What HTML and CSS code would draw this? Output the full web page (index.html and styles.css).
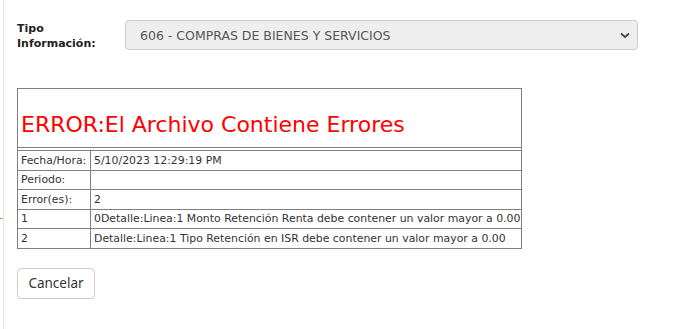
FILE: index.html
```html
<!DOCTYPE html>
<html lang="es">
<head>
    <meta charset="UTF-8">
    <title>Carga de Archivo</title>
    <link rel="stylesheet" href="styles.css">
</head>
<body>
<div class="page">
    <span class="tick"></span>
    <div class="fila">
        <label class="etiqueta" for="tipo">Tipo Información:</label>
        <div class="combo">
            <select id="tipo">
                <option>606 - COMPRAS DE BIENES Y SERVICIOS</option>
            </select>
            <svg class="flecha" width="10" height="7" viewBox="0 0 10 7">
                <path d="M1 1.5 L5 5 L9 1.5" fill="none" stroke="#444" stroke-width="1.8"/>
            </svg>
        </div>
    </div>

    <table class="resultado">
        <colgroup>
            <col class="col1">
            <col>
        </colgroup>
        <tr>
            <td class="titulo" colspan="2">ERROR:El Archivo Contiene Errores</td>
        </tr>
        <tr class="sep"><td colspan="2"></td></tr>
        <tr>
            <td>Fecha/Hora:</td>
            <td>5/10/2023 12:29:19 PM</td>
        </tr>
        <tr>
            <td>Periodo:</td>
            <td></td>
        </tr>
        <tr>
            <td>Error(es):</td>
            <td>2</td>
        </tr>
        <tr>
            <td>1</td>
            <td>0Detalle:Linea:1 Monto Retención Renta debe contener un valor mayor a 0.00</td>
        </tr>
        <tr>
            <td>2</td>
            <td>Detalle:Linea:1 Tipo Retención en ISR debe contener un valor mayor a 0.00</td>
        </tr>
    </table>

    <button class="btn">Cancelar</button>
</div>
</body>
</html>
```

FILE: styles.css
```css
* {
    margin: 0;
    padding: 0;
    box-sizing: border-box;
}

body {
    background: #fff;
    font-family: "DejaVu Sans", Verdana, sans-serif;
    color: #333;
}

.page {
    position: relative;
    margin-left: 3px;
    min-height: 329px;
    border-left: 1px solid #e6e6e6;
    padding: 20px 0 0 13px;
}

.tick {
    position: absolute;
    left: -4px;
    top: 218px;
    width: 3px;
    height: 1px;
    background: #8cc63f;
}

.fila {
    display: flex;
    align-items: flex-start;
}

.etiqueta {
    width: 108px;
    padding-top: 1px;
    font-size: 11px;
    font-weight: bold;
    line-height: 15px;
    color: #222;
}

.combo {
    position: relative;
    width: 513px;
}

.combo select {
    display: block;
    width: 100%;
    height: 30px;
    padding: 0 14px;
    border: 1px solid #ccc;
    border-radius: 4px;
    background: #eee;
    font-family: "DejaVu Sans", Verdana, sans-serif;
    font-size: 12.5px;
    color: #555;
    appearance: none;
    -webkit-appearance: none;
}

.flecha {
    position: absolute;
    right: 8px;
    top: 12px;
}

.resultado {
    margin-top: 37px;
    width: 505px;
    table-layout: fixed;
    border-collapse: collapse;
    border: 1px solid #808080;
    font-size: 10.9px;
    color: #333;
}

.resultado col.col1 {
    width: 73px;
}

.resultado td {
    border: 1px solid #808080;
    height: 19.5px;
    padding: 0 2px 0 3px;
    white-space: nowrap;
}

.resultado td.titulo {
    height: 59px;
    padding: 13px 3px 0 3px;
    font-size: 22px;
    color: #f00;
}

.resultado tr.sep td {
    height: 3px;
    padding: 0;
}

.btn {
    display: block;
    margin-top: 19px;
    width: 78px;
    height: 31px;
    border: 1px solid #ccc;
    border-radius: 4px;
    background: #fff;
    font-family: "Noto Sans", sans-serif;
    font-size: 13.5px;
    color: #333;
}
```
